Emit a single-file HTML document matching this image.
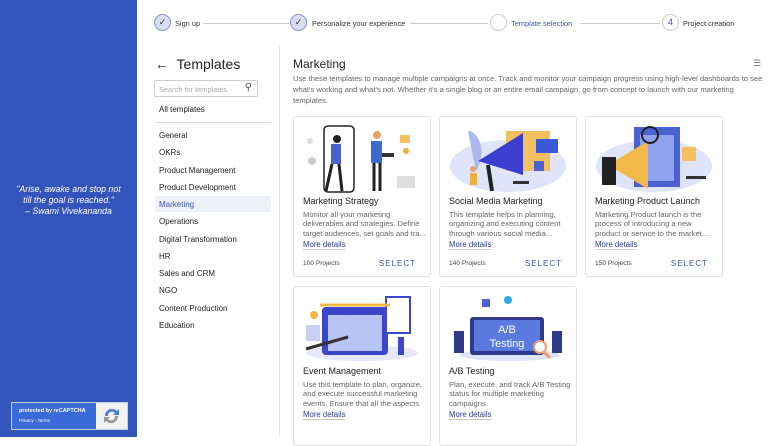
<!DOCTYPE html>
<html><head><meta charset="utf-8"><style>
*{margin:0;padding:0;box-sizing:border-box}
body{width:768px;height:437px;overflow:hidden;background:#fff;font-family:"Liberation Sans",sans-serif;color:#333;position:relative}
.a{position:absolute}
.side{left:0;top:0;width:137px;height:437px;background:#3355bb}
.quote{left:0;top:184px;width:137px;text-align:center;color:#fff;font-style:italic;font-size:8.8px;line-height:11px}
.rc{left:11px;top:402px;width:117px;height:28px;background:#3a6ad8;border:1px solid #c8d0e8}
.rc .ic{position:absolute;right:0;top:0;width:31px;height:26px;background:#f2f2f2}
.step{top:14px;font-size:7.4px;color:#333}
.circ{top:14px;width:17px;height:17px;border-radius:50%;border:1px solid #8a96c8;background:#d8dcf0;font-size:9px;text-align:center;line-height:15px;color:#333}
.line{top:23px;height:1px;background:#ccc}
.nav{font-size:8px;color:#222;left:159px}
.card{width:138px;border:1px solid #e2e2e2;border-radius:3px;background:#fff}
.card h4{position:absolute;left:9px;top:79px;font-size:9px;font-weight:normal;color:#222}
.card p{position:absolute;left:9px;top:93px;width:124px;height:28px;overflow:hidden;font-size:7.6px;line-height:9.3px;color:#666}
.card .md{position:absolute;left:9px;top:123px;font-size:7.8px;color:#2d3a8c;border-bottom:1px solid #ccc}
.card .pj{position:absolute;left:9px;top:143px;font-size:6.6px;color:#444}
.card .sel{position:absolute;right:14px;top:142px;font-size:8px;color:#3d55b0;letter-spacing:1px}
.card svg{position:absolute;left:8px;top:4px}
</style></head><body>
<div class="a side"></div>
<div class="a quote">"Arise, awake and stop not<br>till the goal is reached."<br>– Swami Vivekananda</div>
<div class="a rc"><div style="position:absolute;left:7px;top:5px;color:#fff;font-size:5.5px;font-weight:bold">protected by reCAPTCHA</div><div style="position:absolute;left:7px;top:15px;color:#fff;font-size:4.5px">Privacy - Terms</div><div class="ic"><svg width="31" height="26"><path d="M9 13a7 7 0 0 1 12-5l2-2v6h-6l2-2a4 4 0 0 0-7 3z" fill="#4a7ae0"/><path d="M22 13a7 7 0 0 1-12 5l-2 2v-6h6l-2 2a4 4 0 0 0 7-3z" fill="#999"/></svg></div></div>

<div class="a circ" style="left:154px">✓</div><div class="a step" style="left:175px;top:19px">Sign up</div>
<div class="a line" style="left:203px;width:86px"></div>
<div class="a circ" style="left:290px">✓</div><div class="a step" style="left:312px;top:19px">Personalize your experience</div>
<div class="a line" style="left:410px;width:78px"></div>
<div class="a circ" style="left:490px;background:#fff;border-color:#ccc"></div><div class="a step" style="left:511px;top:19px;color:#3d55b0">Template selection</div>
<div class="a line" style="left:580px;width:80px"></div>
<div class="a circ" style="left:662px;background:#fff;border-color:#ccc;color:#3d55b0">4</div><div class="a step" style="left:683px;top:19px">Project creation</div>

<div class="a" style="left:155px;top:56px;font-size:14px;color:#222">←&nbsp; Templates</div>
<div class="a" style="left:154px;top:80px;width:104px;height:17px;border:1px solid #ccc;border-radius:2px;font-size:7.4px;color:#aaa;padding:4px 4px">Search for templates<span style="position:absolute;right:5px;top:1px;color:#555;font-size:10px">⚲</span></div>
<div class="a nav" style="top:105px">All templates</div>
<div class="a" style="left:155px;top:122px;width:116px;height:1px;background:#ddd"></div>
<div class="a nav" style="top:131px">General</div>
<div class="a nav" style="top:148px">OKRs</div>
<div class="a nav" style="top:166px">Product Management</div>
<div class="a nav" style="top:183px">Product Development</div>
<div class="a" style="left:155px;top:196px;width:116px;height:16px;background:#eef0f8"></div>
<div class="a nav" style="top:200px;color:#3d55b0">Marketing</div>
<div class="a nav" style="top:217px">Operations</div>
<div class="a nav" style="top:235px">Digital Transformation</div>
<div class="a nav" style="top:252px">HR</div>
<div class="a nav" style="top:269px">Sales and CRM</div>
<div class="a nav" style="top:286px">NGO</div>
<div class="a nav" style="top:304px">Content Production</div>
<div class="a nav" style="top:321px">Education</div>
<div class="a" style="left:279px;top:45px;width:1px;height:392px;background:#e4e4e4"></div>

<div class="a" style="left:293px;top:57px;font-size:12px;color:#222">Marketing</div>
<div class="a" style="left:753px;top:58px;font-size:9px;color:#777">☰</div>
<div class="a" style="left:293px;top:73px;width:470px;font-size:7.6px;line-height:11px;color:#666">Use these templates to manage multiple campaigns at once. Track and monitor your campaign progress using high-level dashboards to see what's working and what's not. Whether it's a single blog or an entire email campaign, go from concept to launch with our marketing templates.</div>

<div class="a card" style="left:293px;top:116px;height:161px">
<svg width="122" height="72"><rect x="22" y="5" width="30" height="66" rx="4" fill="none" stroke="#222" stroke-width="1.5"/><circle cx="35" cy="18" r="4" fill="#222"/><rect x="29" y="23" width="10" height="20" fill="#4a63d0"/><path d="M30 43l-6 27M37 43l3 27" stroke="#222" stroke-width="3"/><circle cx="75" cy="14" r="4" fill="#e8a070"/><rect x="69" y="20" width="11" height="22" fill="#3d6ad0"/><path d="M72 42v28M78 42v28" stroke="#222" stroke-width="3"/><rect x="80" y="32" width="12" height="4" fill="#333"/><circle cx="10" cy="40" r="4" fill="#ccc"/><circle cx="8" cy="20" r="3" fill="#ddd"/><circle cx="104" cy="30" r="3" fill="#f0b040"/><rect x="98" y="14" width="10" height="8" fill="#f2c060"/><rect x="95" y="55" width="18" height="12" fill="#ddd"/></svg>
<h4>Marketing Strategy</h4><p>Monitor all your marketing deliverables and strategies. Define target audiences, set goals and tra...</p><span class="md">More details</span><span class="pj">100 Projects</span><span class="sel">SELECT</span></div>

<div class="a card" style="left:439px;top:116px;height:161px">
<svg width="122" height="72"><ellipse cx="60" cy="45" rx="58" ry="26" fill="#dfe4fa"/><path d="M20 10c10 0 20 20 8 40z" fill="#aab8ee"/><rect x="58" y="10" width="44" height="40" fill="#f2c060"/><path d="M30 40l45-28v42z" fill="#3b3fd0"/><path d="M40 44l4 26" stroke="#222" stroke-width="4"/><rect x="88" y="18" width="22" height="14" fill="#3b5ad8"/><rect x="86" y="40" width="10" height="10" fill="#4a63d0"/><circle cx="25" cy="48" r="3" fill="#e8a070"/><rect x="22" y="52" width="7" height="12" fill="#f0b040"/><rect x="65" y="60" width="16" height="3" fill="#333"/></svg>
<h4>Social Media Marketing</h4><p>This template helps in planning, organizing and executing content through various social media...</p><span class="md">More details</span><span class="pj">140 Projects</span><span class="sel">SELECT</span></div>

<div class="a card" style="left:585px;top:116px;height:161px">
<svg width="122" height="72"><ellipse cx="60" cy="45" rx="58" ry="26" fill="#dfe4fa"/><rect x="40" y="6" width="46" height="60" fill="#4a63d0"/><rect x="46" y="14" width="34" height="46" fill="#8ea2f0"/><path d="M14 44l40-24v48z" fill="#f2b84a"/><rect x="8" y="36" width="14" height="28" fill="#222"/><circle cx="56" cy="14" r="8" fill="none" stroke="#222" stroke-width="2"/><rect x="88" y="26" width="14" height="14" fill="#f2c060"/><rect x="92" y="55" width="20" height="3" fill="#333"/></svg>
<h4>Marketing Product Launch</h4><p>Marketing Product launch is the process of introducing a new product or service to the market....</p><span class="md">More details</span><span class="pj">150 Projects</span><span class="sel">SELECT</span></div>

<div class="a card" style="left:293px;top:286px;height:160px">
<svg width="122" height="72"><ellipse cx="60" cy="62" rx="56" ry="8" fill="#e4e8fa"/><rect x="20" y="16" width="66" height="48" rx="4" fill="#3b46c8"/><rect x="26" y="24" width="54" height="36" fill="#b8c4f4"/><rect x="84" y="6" width="24" height="36" fill="#fff" stroke="#3b46c8" stroke-width="2"/><path d="M18 14l70 0" stroke="#f2b84a" stroke-width="3"/><path d="M4 58l42-12" stroke="#333" stroke-width="3"/><rect x="4" y="34" width="14" height="16" fill="#c8d0f4"/><circle cx="12" cy="24" r="4" fill="#f2b84a"/><rect x="96" y="46" width="6" height="18" fill="#3b46c8"/></svg>
<h4>Event Management</h4><p>Use this template to plan, organize, and execute successful marketing events. Ensure that all the aspects ...</p><span class="md">More details</span></div>

<div class="a card" style="left:439px;top:286px;height:160px">
<svg width="122" height="72"><ellipse cx="62" cy="64" rx="50" ry="6" fill="#dfe4fa"/><rect x="22" y="26" width="74" height="38" rx="3" fill="#2f3a8c"/><rect x="26" y="29" width="66" height="31" fill="#5a7ae0"/><text x="59" y="42" fill="#fff" font-size="11" text-anchor="middle" font-family="Liberation Sans">A/B</text><text x="59" y="56" fill="#fff" font-size="11" text-anchor="middle" font-family="Liberation Sans">Testing</text><circle cx="92" cy="56" r="6" fill="#fff" stroke="#f0a070" stroke-width="2"/><path d="M96 61l6 6" stroke="#f0a070" stroke-width="3"/><circle cx="60" cy="9" r="4" fill="#2aa8e8"/><rect x="34" y="8" width="8" height="8" fill="#4a63d0"/><rect x="6" y="40" width="10" height="22" fill="#2f3a8c"/><rect x="104" y="40" width="10" height="22" fill="#2f3a8c"/></svg>
<h4>A/B Testing</h4><p>Plan, execute, and track A/B Testing status for multiple marketing campaigns.</p><span class="md">More details</span></div>
</body></html>
